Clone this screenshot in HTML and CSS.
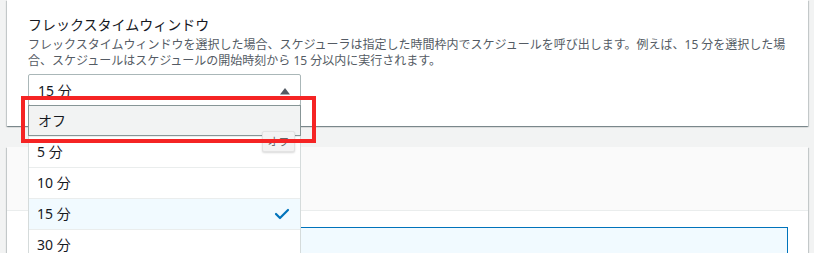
FILE: index.html
```html
<!DOCTYPE html>
<html lang="ja">
<head>
    <meta charset="UTF-8">
    <meta name="viewport" content="width=device-width, initial-scale=1.0">
    <title>フレックスタイムウィンドウ</title>
    <link rel="stylesheet" href="styles.css">
</head>
<body>
    <div class="page">
        <div class="card card_top">
            <div class="field">
                <div class="field_label">フレックスタイムウィンドウ</div>
                <div class="field_desc">フレックスタイムウィンドウを選択した場合、スケジューラは指定した時間枠内でスケジュールを呼び出します。例えば、15 分を選択した場合、スケジュールはスケジュールの開始時刻から 15 分以内に実行されます。</div>
                <div class="select_wrap">
                    <div class="select_box">
                        <span>15 分</span>
                        <svg class="caret" width="12" height="8" viewBox="0 0 12 8"><path d="M1 7.5 L6 1 L11 7.5 Z" fill="#545b64"/></svg>
                    </div>
                    <ul class="dropdown">
                        <li class="opt opt_hover">オフ</li>
                        <li class="opt">5 分</li>
                        <li class="opt">10 分</li>
                        <li class="opt opt_selected">15 分
                            <svg class="check" width="16" height="12" viewBox="0 0 16 12"><path d="M2 6 L6 10 L14 2" fill="none" stroke="#0073bb" stroke-width="2.2" stroke-linecap="round" stroke-linejoin="round"/></svg>
                        </li>
                        <li class="opt">30 分</li>
                    </ul>
                </div>
            </div>
        </div>

        <div class="card card_second">
            <div class="card_head"></div>
            <div class="card_body">
                <div class="info_box"></div>
            </div>
        </div>
    </div>

    <div class="tooltip">オフ</div>
    <div class="highlight"></div>
</body>
</html>
```

FILE: styles.css
```css
*{margin: 0; padding: 0; box-sizing: border-box;}
body{background: #f2f3f3; font-family: "Noto Sans", "Noto Sans CJK JP", sans-serif; color: #16191f; overflow: hidden;}
ul{list-style: none;}

.page{padding: 0 6px 0 7px;}
.card{background: #fff; box-shadow: 0 1px 1px 0 rgba(0,28,36,.3), 1px 1px 1px 0 rgba(0,28,36,.15), -1px 1px 1px 0 rgba(0,28,36,.15);}
.card_top{height: 126px; padding: 15px 20px 0 21px;}

.field_label{font-size: 14px; line-height: 20px; font-weight: 400;}
.field_desc{font-size: 12px; line-height: 16px; color: #545b64; margin-top: 2px;}

.select_wrap{position: relative; width: 273px; margin-top: 5px;}
.select_box{height: 32px; border: 1px solid #aab7b8; border-radius: 2px; display: flex; align-items: center; justify-content: space-between; padding: 0 9px 0 9px; font-size: 14px;}
.caret{margin-top: 2px;}

.dropdown{position: absolute; top: 31px; left: 0; width: 273px; z-index: 10; background: #fff; border-left: 1px solid #d5dbdb; border-right: 1px solid #d5dbdb;}
.opt{height: 31px; line-height: 30px; padding: 0 8px; font-size: 14px; border-top: 1px solid #eaeded; display: flex; align-items: center; justify-content: space-between;}
.opt_hover{background: #f2f3f3; border: 1px solid #879596; margin: 0 -1px; padding-left: 9px;}
.opt_selected{background: #f1faff;}
.check{margin-right: 2px;}

.card_second{margin-top: 21px;}
.card_head{height: 64px; background: #fafafa; border-bottom: 1px solid #eaeded;}
.card_body{padding: 16px 20px 20px 21px;}
.info_box{height: 60px; background: #f1faff; border: 1px solid #0073bb;}

.tooltip{position: absolute; left: 262px; top: 131px; width: 33px; height: 21px; background: #f3f3f3; border: 1px solid #e3e3e3; border-radius: 2px; box-shadow: 0 1px 2px rgba(0,0,0,.15); font-size: 11px; color: #666; text-align: center; line-height: 19px; z-index: 20;}
.highlight{position: absolute; left: 21px; top: 96px; width: 295px; height: 47px; border: 4px solid #f52424; z-index: 30;}
```
